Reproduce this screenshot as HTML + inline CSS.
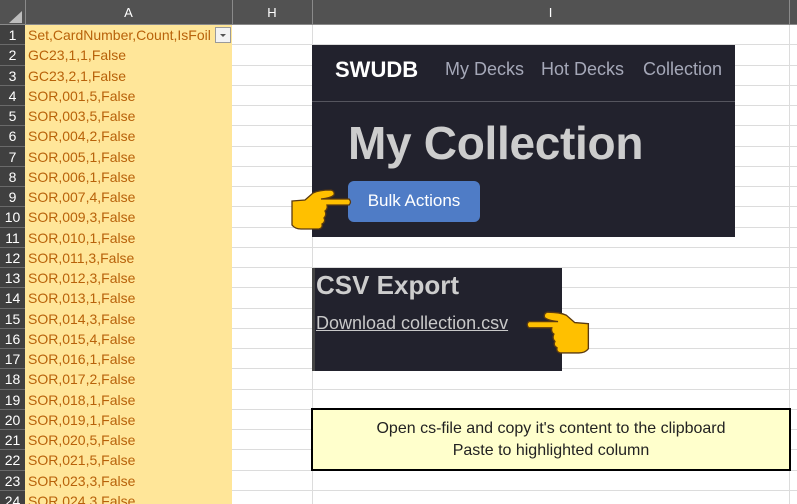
<!DOCTYPE html>
<html><head><meta charset="utf-8"><style>
*{margin:0;padding:0;box-sizing:border-box}
html,body{width:797px;height:504px;overflow:hidden}
body{background:#fff;font-family:"Liberation Sans",sans-serif;position:relative}
.abs{position:absolute}
.hdr{left:0;top:0;width:797px;height:25px;background:#525252;border-bottom:1px solid #8a8a8a}
.hl{position:absolute;top:0;height:25px;width:1px;background:#8a8a8a}
.hc{position:absolute;top:0;height:25px;line-height:25px;color:#fff;font-size:13px;text-align:center}
.rn{position:absolute;left:0;width:25px;background:#404040;color:#fff;font-size:14px;text-align:center;border-bottom:1px solid #6a6a6a}
.cell{position:absolute;left:25px;width:207px;background:#ffe699;color:#b8620a;font-size:14px;padding-left:3px}
.gl{position:absolute;left:232px;width:565px;height:1px;background:#dcdcdc}
.vl{position:absolute;top:25px;width:1px;height:479px;background:#dcdcdc}
.panel{background:#22222d}
</style></head><body>
<div class="abs hdr"></div>
<div class="hl" style="left:25px"></div>
<div class="hl" style="left:232px"></div>
<div class="hl" style="left:312px"></div>
<div class="hl" style="left:789px"></div>
<div class="hc" style="left:25px;width:207px">A</div>
<div class="hc" style="left:232px;width:80px">H</div>
<div class="hc" style="left:312px;width:477px">I</div>
<svg class="abs" style="left:9px;top:11px" width="13" height="12"><polygon points="13,0 13,12 0,12" fill="#bdbdbd"/></svg>
<div class="vl" style="left:312px"></div>
<div class="vl" style="left:789px"></div>
<div id="rows"></div>
<script>
var d=["Set,CardNumber,Count,IsFoil","GC23,1,1,False","GC23,2,1,False","SOR,001,5,False","SOR,003,5,False","SOR,004,2,False","SOR,005,1,False","SOR,006,1,False","SOR,007,4,False","SOR,009,3,False","SOR,010,1,False","SOR,011,3,False","SOR,012,3,False","SOR,013,1,False","SOR,014,3,False","SOR,015,4,False","SOR,016,1,False","SOR,017,2,False","SOR,018,1,False","SOR,019,1,False","SOR,020,5,False","SOR,021,5,False","SOR,023,3,False","SOR,024,3,False"];
var h="",H=20.25;
for(var i=0;i<d.length;i++){var t=25+i*H;
h+='<div class="rn" style="top:'+t+'px;height:'+H+'px;line-height:'+H+'px">'+(i+1)+'</div>';
h+='<div class="cell" style="top:'+t+'px;height:'+H+'px;line-height:'+H+'px">'+d[i]+'</div>';
h+='<div class="gl" style="top:'+(t+H-1)+'px"></div>';}
document.getElementById("rows").innerHTML=h;
</script>
<div class="abs" style="left:215px;top:27px;width:16px;height:16px;background:#f3f3f3;border:1px solid #9a9a9a"><svg width="14" height="14"><polygon points="4,6 10,6 7,9" fill="#555"/></svg></div>

<div class="abs panel" style="left:312px;top:45px;width:423px;height:192px"></div>
<div class="abs" style="left:312px;top:101px;width:423px;height:1px;background:#55555e"></div>
<div class="abs" style="left:335px;top:57px;font-size:22px;font-weight:bold;color:#fff">SWUDB</div>
<div class="abs" style="left:445px;top:59px;font-size:18px;color:#a5a8b8">My Decks</div>
<div class="abs" style="left:541px;top:59px;font-size:18px;color:#a5a8b8">Hot Decks</div>
<div class="abs" style="left:643px;top:59px;font-size:18px;color:#a5a8b8">Collection</div>
<div class="abs" style="left:348px;top:116px;font-size:46px;font-weight:bold;color:#cdcdcd;letter-spacing:-0.3px">My Collection</div>
<div class="abs" style="left:348px;top:181px;width:132px;height:41px;background:#4f7cc6;border-radius:6px;color:#fff;font-size:17px;line-height:40px;text-align:center">Bulk Actions</div>

<div class="abs panel" style="left:312px;top:268px;width:250px;height:103px;border-left:3px solid #444"></div>
<div class="abs" style="left:316px;top:270px;font-size:26px;font-weight:bold;color:#cdcdcd">CSV Export</div>
<div class="abs" style="left:316px;top:313px;font-size:18px;color:#c8c8c8;text-decoration:underline">Download collection.csv</div>

<svg class="abs" style="left:291px;top:187px" width="62" height="44" viewBox="0 0 62 44"><path d="M1,14 L14,13 L22,6 Q28,3 40,3 Q44,4 43,8 Q40,11 30,12 L58,12 Q61,15 58,18 L36,18 Q37,22 34,24 Q36,28 33,31 Q35,35 31,37 Q32,41 28,42 L10,42 Q4,42 1,38 Z" fill="#ffc000" stroke="#5a3a10" stroke-width="1.3"/></svg>
<svg class="abs" style="left:524px;top:309px" width="66" height="46" viewBox="0 0 62 44"><g transform="translate(62,0) scale(-1,1)"><path d="M1,14 L14,13 L22,6 Q28,3 40,3 Q44,4 43,8 Q40,11 30,12 L58,12 Q61,15 58,18 L36,18 Q37,22 34,24 Q36,28 33,31 Q35,35 31,37 Q32,41 28,42 L10,42 Q4,42 1,38 Z" fill="#ffc000" stroke="#5a3a10" stroke-width="1.3"/></g></svg>

<div class="abs" style="left:311px;top:408px;width:480px;height:63px;background:#ffffcc;border:2px solid #000;text-align:center;font-size:16px;line-height:22px;color:#222;padding-top:8px">Open cs-file and copy it's content to the clipboard<br>Paste to highlighted column</div>
</body></html>
